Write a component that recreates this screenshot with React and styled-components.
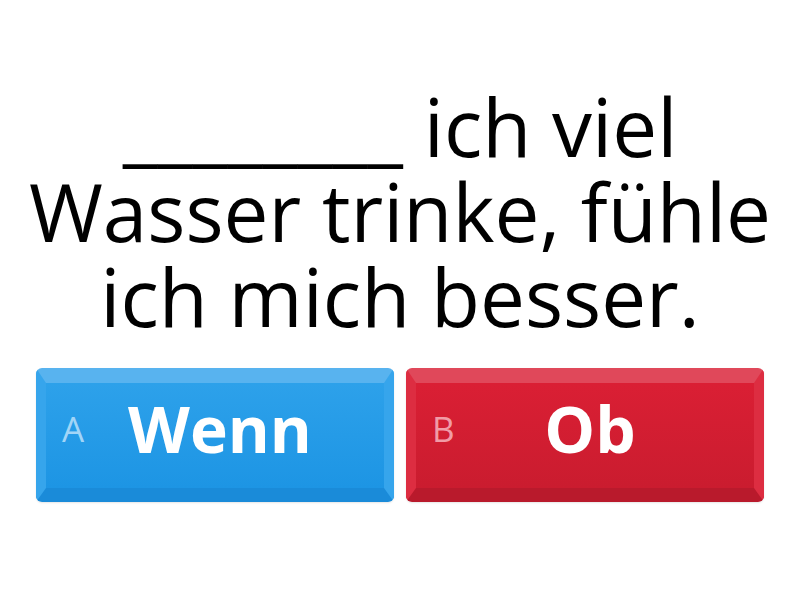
import React from "react";
import styled, { createGlobalStyle } from "styled-components";

const Global = createGlobalStyle`
  html, body { margin: 0; padding: 0; background: #fff; }
  body { font-family: "Open Sans", "Noto Sans", sans-serif; }
`;

const Page = styled.div`
  width: 800px;
  height: 600px;
  display: flex;
  flex-direction: column;
  align-items: center;
  box-sizing: border-box;
  padding-top: 83px;
`;

const Question = styled.div`
  width: 780px;
  text-align: center;
  font-size: 80px;
  line-height: 85px;
  color: #000;
`;

const Answers = styled.div`
  display: grid;
  grid-template-columns: 358px 358px;
  gap: 12px;
  margin-top: 30px;
`;

const Answer = styled.div`
  height: 134px;
  border-radius: 6px;
  box-sizing: border-box;
  display: flex;
  align-items: center;
  border-style: solid;
  border-width: 15px 10px 14px 10px;
  border-color: ${(p) => p.$c.top} ${(p) => p.$c.side} ${(p) => p.$c.bottom} ${(p) => p.$c.side};
  background: linear-gradient(${(p) => p.$c.faceTop}, ${(p) => p.$c.faceBottom});
  box-shadow: 0 1px 2px rgba(0, 0, 0, 0.1);
`;

const Letter = styled.span`
  width: 66px;
  padding: 0 0 14px 16px;
  box-sizing: border-box;
  font-size: 35px;
  color: ${(p) => p.$c};
`;

const Label = styled.span`
  flex: 1;
  padding: 0 56px 14px 0;
  text-align: center;
  font-size: 64px;
  font-weight: 700;
  color: #fff;
`;

const blue = {
  top: "#58b3ef",
  side: "#36a5ec",
  bottom: "#1a8bd9",
  faceTop: "#2da1ea",
  faceBottom: "#1d95e4",
};

const red = {
  top: "#e0485a",
  side: "#dd2d41",
  bottom: "#b91a2c",
  faceTop: "#da1f34",
  faceBottom: "#ca1c2f",
};

export default function App() {
  return (
    <>
      <Global />
      <Page>
        <Question>
          ________ ich viel Wasser trinke, fühle ich mich besser.
        </Question>
        <Answers>
          <Answer $c={blue}>
            <Letter $c="#a2d5f7">A</Letter>
            <Label>Wenn</Label>
          </Answer>
          <Answer $c={red}>
            <Letter $c="#f19ba6">B</Letter>
            <Label>Ob</Label>
          </Answer>
        </Answers>
      </Page>
    </>
  );
}
